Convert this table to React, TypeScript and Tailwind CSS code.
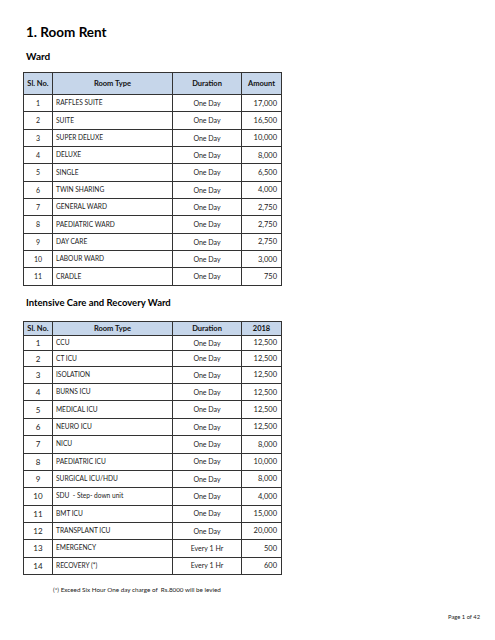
const ward = [
  ["1", "RAFFLES SUITE", "One Day", "17,000"],
  ["2", "SUITE", "One Day", "16,500"],
  ["3", "SUPER DELUXE", "One Day", "10,000"],
  ["4", "DELUXE", "One Day", "8,000"],
  ["5", "SINGLE", "One Day", "6,500"],
  ["6", "TWIN SHARING", "One Day", "4,000"],
  ["7", "GENERAL WARD", "One Day", "2,750"],
  ["8", "PAEDIATRIC WARD", "One Day", "2,750"],
  ["9", "DAY CARE", "One Day", "2,750"],
  ["10", "LABOUR WARD", "One Day", "3,000"],
  ["11", "CRADLE", "One Day", "750"],
];

const icu = [
  ["1", "CCU", "One Day", "12,500"],
  ["2", "CT ICU", "One Day", "12,500"],
  ["3", "ISOLATION", "One Day", "12,500"],
  ["4", "BURNS ICU", "One Day", "12,500"],
  ["5", "MEDICAL ICU", "One Day", "12,500"],
  ["6", "NEURO ICU", "One Day", "12,500"],
  ["7", "NICU", "One Day", "8,000"],
  ["8", "PAEDIATRIC ICU", "One Day", "10,000"],
  ["9", "SURGICAL ICU/HDU", "One Day", "8,000"],
  ["10", "SDU  - Step- down unit", "One Day", "4,000"],
  ["11", "BMT ICU", "One Day", "15,000"],
  ["12", "TRANSPLANT ICU", "One Day", "20,000"],
  ["13", "EMERGENCY", "Every 1 Hr", "500"],
  ["14", "RECOVERY (*)", "Every 1 Hr", "600"],
];

function RateTable({
  rows,
  last,
  headH,
  rowH,
  slSize,
}: {
  rows: string[][];
  last: string;
  headH: string;
  rowH: (i: number) => string;
  slSize: string;
}) {
  return (
    <table className="ml-[23px] w-[258px] table-fixed border-collapse border-[1.5px] border-[#333]">
      <colgroup>
        <col className="w-[29px]" />
        <col className="w-[120px]" />
        <col className="w-[69px]" />
        <col className="w-[40px]" />
      </colgroup>
      <thead>
        <tr className={`${headH} bg-[#c6d6ea] text-[7.5px] font-bold text-[#111]`}>
          <th className="border-[1.5px] border-[#333] p-0 text-center">Sl. No.</th>
          <th className="border-[1.5px] border-[#333] p-0 text-center">Room Type</th>
          <th className="border-[1.5px] border-[#333] p-0 text-center">Duration</th>
          <th className="border-[1.5px] border-[#333] p-0 text-center">{last}</th>
        </tr>
      </thead>
      <tbody>
        {rows.map((r, i) => (
          <tr key={r[0]} className={`${rowH(i)} text-[#222]`}>
            <td className={`border-y border-x-[1.5px] border-[#333] p-0 text-center ${slSize}`}>{r[0]}</td>
            <td className="border-y border-x-[1.5px] border-[#333] py-0 pl-[3px] text-left text-[6.6px] whitespace-pre">{r[1]}</td>
            <td className="border-y border-x-[1.5px] border-[#333] p-0 text-center text-[7px]">{r[2]}</td>
            <td className="border-y border-x-[1.5px] border-[#333] py-0 pr-[4px] text-right text-[7.5px]">{r[3]}</td>
          </tr>
        ))}
      </tbody>
    </table>
  );
}

export default function App() {
  return (
    <div className="relative h-[640px] w-[495px] bg-white font-['Lato',sans-serif] text-black">
      <div className="pt-[23px]">
        <h1 className="ml-[26px] text-[13.5px] font-bold leading-[18px]">1. Room Rent</h1>
        <h2 className="ml-[26px] mt-[8px] text-[10px] font-bold leading-[14px]">Ward</h2>
        <div className="mt-[9px]">
          <RateTable
            rows={ward}
            last="Amount"
            headH="h-[22px]"
            rowH={() => "h-[17.35px]"}
            slSize="text-[7px]"
          />
        </div>
        <h2 className="ml-[26px] mt-[10px] text-[9.5px] font-bold leading-[14px]">
          Intensive Care and Recovery Ward
        </h2>
        <div className="mt-[11px]">
          <RateTable
            rows={icu}
            last="2018"
            headH="h-[14px]"
            rowH={(i) => (i < 2 ? "h-[15.5px]" : "h-[17.35px]")}
            slSize="text-[8px]"
          />
        </div>
        <p className="ml-[53px] mt-[11px] text-[6.3px] leading-[8px] text-[#222] whitespace-pre">
          (*) Exceed Six Hour One day charge of  Rs.8000 will be levied
        </p>
      </div>
      <p className="absolute right-[15px] top-[613px] text-[5.8px] leading-[8px] text-[#222]">Page 1 of 42</p>
    </div>
  );
}
